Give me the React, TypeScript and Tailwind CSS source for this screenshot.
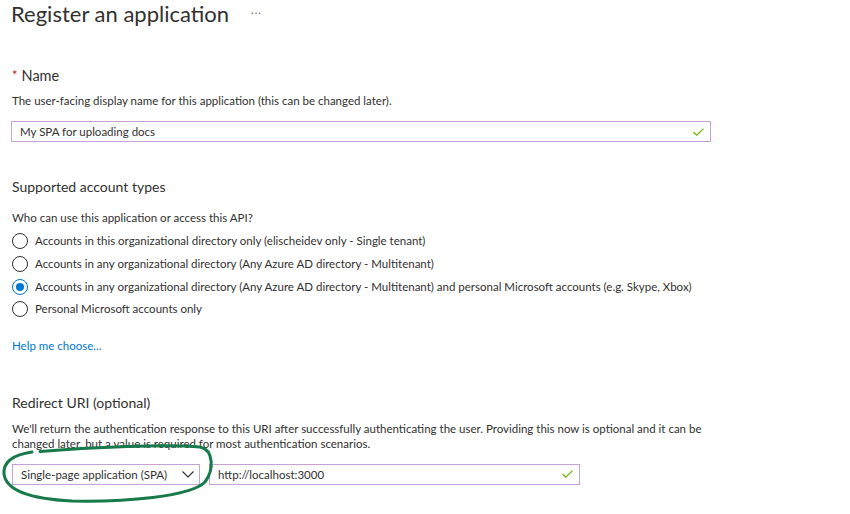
import React, { useState } from "react";

const font = "font-['Segoe_UI','Lato',sans-serif]";

function Check() {
  return (
    <svg width="11" height="8" viewBox="0 0 11 8" fill="none">
      <path d="M0.5 4 L3.8 7.2 L10.5 0.6" stroke="#6bb700" strokeWidth="1.2" />
    </svg>
  );
}

function Chevron() {
  return (
    <svg width="12" height="7" viewBox="0 0 12 7" fill="none">
      <path d="M0.5 0.5 L6 6 L11.5 0.5" stroke="#323130" strokeWidth="1.1" />
    </svg>
  );
}

const accountTypes = [
  "Accounts in this organizational directory only (elischeidev only - Single tenant)",
  "Accounts in any organizational directory (Any Azure AD directory - Multitenant)",
  "Accounts in any organizational directory (Any Azure AD directory - Multitenant) and personal Microsoft accounts (e.g. Skype, Xbox)",
  "Personal Microsoft accounts only",
];

function Radio({ label, checked, onSelect }: { label: string; checked: boolean; onSelect: () => void }) {
  return (
    <button type="button" onClick={onSelect} className="flex items-center h-[22.7px] text-left">
      <span
        className={
          checked
            ? "w-4 h-4 rounded-full border border-[#0078d4] flex items-center justify-center"
            : "w-4 h-4 rounded-full border border-[#323130]"
        }
      >
        {checked && <span className="w-2 h-2 rounded-full bg-[#0078d4]" />}
      </span>
      <span className="ml-[7px] text-[11.5px] leading-4 text-[#323130]">{label}</span>
    </button>
  );
}

export default function App() {
  const [selected, setSelected] = useState(2);

  return (
    <div className={`relative w-[850px] h-[514px] bg-white overflow-hidden ${font} text-[#323130]`}>
      <div className="pl-[11px] flex flex-col">
        <div className="flex items-center h-[27px]">
          <h1 className="text-[22px] leading-[27px]">Register an application</h1>
          <span className="ml-[22px] mt-[-6px] text-[11px] tracking-[1px] text-[#605e5c]">...</span>
        </div>

        <div className="mt-[39px] ml-px flex items-center text-[14.5px] leading-5 h-5">
          <span className="text-[#a4262c] text-[13px] mr-[4px] -mt-[3px]">*</span>
          <span>Name</span>
        </div>
        <p className="mt-[7px] ml-px text-[11.5px] leading-4">
          The user-facing display name for this application (this can be changed later).
        </p>
        <div className="mt-[12px] w-[700px] h-[21px] border border-[#c8a2d3] flex items-center justify-between pl-2 pr-[6px]">
          <span className="text-[11.5px]">My SPA for uploading docs</span>
          <Check />
        </div>

        <h2 className="mt-[35px] ml-px text-[14px] leading-5">Supported account types</h2>
        <p className="mt-[13px] ml-px text-[11.5px] leading-4">Who can use this application or access this API?</p>
        <div className="mt-[4px] ml-px flex flex-col">
          {accountTypes.map((label, i) => (
            <Radio key={i} label={label} checked={selected === i} onSelect={() => setSelected(i)} />
          ))}
        </div>
        <a href="#" className="mt-[17px] ml-px text-[11.5px] leading-4 text-[#0078d4] w-fit">
          Help me choose...
        </a>

        <h2 className="mt-[39px] ml-px text-[14px] leading-5">Redirect URI (optional)</h2>
        <p className="mt-[8px] ml-px text-[11.5px] leading-[15px] w-[700px]">
          We'll return the authentication response to this URI after successfully authenticating the user. Providing this
          now is optional and it can be changed later, but a value is required for most authentication scenarios.
        </p>
        <div className="mt-[13px] ml-px flex gap-[9px]">
          <div className="w-[188px] h-[21px] border border-[#c8a2d3] flex items-center justify-between pl-2 pr-[5px]">
            <span className="text-[11.5px]">Single-page application (SPA)</span>
            <Chevron />
          </div>
          <div className="w-[371px] h-[21px] border border-[#c8a2d3] flex items-center justify-between pl-2 pr-[6px]">
            <span className="text-[11.5px]">http://localhost:3000</span>
            <Check />
          </div>
        </div>
      </div>

      {/* hand-drawn highlight around the platform picker */}
      <svg className="absolute left-0 top-0 pointer-events-none" width="850" height="514" viewBox="0 0 850 514" fill="none">
        <path
          d="M40 451.5 C90 447, 170 444, 200 447 C214 450, 214 470, 205 482 C190 497, 125 502, 72 501 C30 499, 6 490, 4 474 C3 462, 12 455, 32 452"
          stroke="#167a4a"
          strokeWidth="3"
          strokeLinecap="round"
        />
      </svg>
    </div>
  );
}
